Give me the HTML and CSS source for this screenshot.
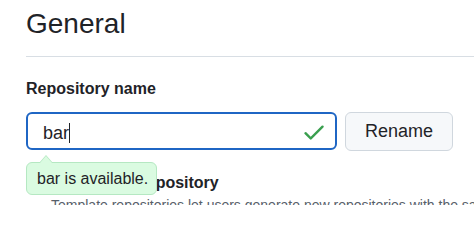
FILE: index.html
```html
<!DOCTYPE html>
<html>
<head>
<meta charset="utf-8">
<link rel="stylesheet" href="styles.css">
</head>
<body>
<div class="page">
  <h1 class="title">General</h1>
  <label class="field-label">Repository name</label>
  <div class="rename-row">
    <div class="input-group">
      <div class="input">
        <span class="value">bar</span><span class="caret"></span>
        <span class="spacer"></span>
        <svg class="check" viewBox="0 0 16 16" width="26" height="26"><path d="M13.78 4.22a.75.75 0 0 1 0 1.06l-7.25 7.25a.75.75 0 0 1-1.06 0L2.22 9.28a.751.751 0 0 1 .018-1.042.751.751 0 0 1 1.042-.018L6 10.94l6.72-6.72a.75.75 0 0 1 1.06 0Z"/></svg>
      </div>
      <div class="tooltip">bar is available.</div>
    </div>
    <button class="btn">Rename</button>
  </div>
  <div class="checkbox-row">
    <span class="checkbox"></span>
    <span class="checkbox-label">Template repository</span>
  </div>
  <p class="note">Template repositories let users generate new repositories with the same directory structure and files.</p>
</div>
</body>
</html>
```
FILE: styles.css
```css
html, body {
  margin: 0;
  padding: 0;
  background: #ffffff;
  overflow: hidden;
}
body {
  font-family: "Liberation Sans", Arial, sans-serif;
  color: #1f2328;
  width: 474px;
  height: 205px;
}
.page {
  padding-left: 26px;
}
.title {
  margin: 0;
  padding: 6px 0 14px;
  font-size: 28px;
  line-height: 36px;
  font-weight: 400;
  border-bottom: 1px solid #d8dee4;
}
.field-label {
  display: block;
  margin-top: 20px;
  font-size: 16px;
  line-height: 24px;
  font-weight: 700;
}
.rename-row {
  display: flex;
  gap: 8px;
  margin-top: 11px;
}
.input-group {
  position: relative;
  width: 311px;
}
.input {
  box-sizing: border-box;
  height: 38px;
  display: flex;
  align-items: center;
  padding: 0 8px 0 15px;
  border: 2px solid #1f66c4;
  border-radius: 6px;
  font-size: 18px;
}
.value {
  line-height: 24px;
  padding-top: 4px;
}
.caret {
  width: 1px;
  height: 20px;
  margin-top: 3px;
  background: #1f2328;
}
.spacer { flex: 1; }
.check {
  fill: #3a9f4f;
  margin-top: 2px;
}
.tooltip {
  position: absolute;
  left: 0;
  top: 50px;
  box-sizing: border-box;
  width: 131px;
  height: 33px;
  padding-left: 10px;
  background: #dafbe1;
  border: 1px solid #b5e8c2;
  border-radius: 6px;
  font-size: 16px;
  line-height: 31px;
  color: #1f2328;
  z-index: 2;
}
.tooltip::before {
  content: "";
  position: absolute;
  left: 12px;
  top: -8px;
  border: 7px solid transparent;
  border-top: 0;
  border-bottom: 8px solid #b5e8c2;
}
.tooltip::after {
  content: "";
  position: absolute;
  left: 13px;
  top: -7px;
  border: 6px solid transparent;
  border-top: 0;
  border-bottom: 7px solid #dafbe1;
}
.btn {
  box-sizing: border-box;
  width: 108px;
  height: 39px;
  background: #f6f8fa;
  border: 1px solid #d0d7de;
  border-radius: 6px;
  font-family: "Liberation Sans", Arial, sans-serif;
  font-size: 18px;
  font-weight: 500;
  color: #1f2328;
  padding: 0;
}
.checkbox-row {
  display: flex;
  align-items: center;
  gap: 6px;
  margin-top: 20px;
  padding-left: 20px;
}
.checkbox {
  width: 13px;
  height: 13px;
  border: 1px solid #6e7781;
  border-radius: 3px;
}
.checkbox-label {
  font-size: 16px;
  line-height: 24px;
  font-weight: 700;
}
.note {
  margin: 0;
  padding-left: 25px;
  font-size: 14px;
  line-height: 21px;
  color: #57606a;
  white-space: nowrap;
  overflow: hidden;
}
```
